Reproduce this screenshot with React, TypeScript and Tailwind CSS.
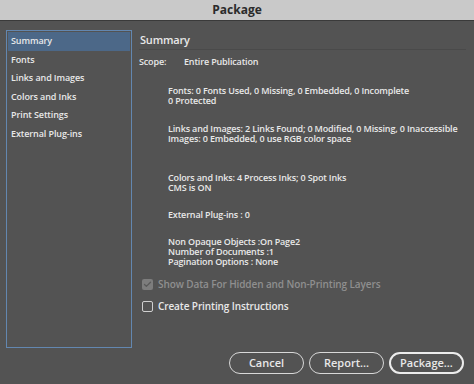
import { Check } from "lucide-react";

const sections = ["Summary", "Fonts", "Links and Images", "Colors and Inks", "Print Settings", "External Plug-ins"];

export default function App() {
  return (
    <div className="w-[474px] h-[384px] bg-[#535353] flex flex-col text-[#e8e8e8] overflow-hidden" style={{ fontFamily: '"Open Sans", "DejaVu Sans", sans-serif' }}>
      {/* Title bar */}
      <div className="h-[21px] bg-[#c9c9c9] border-b border-[#3a3a3a] flex items-center justify-center">
        <span className="text-[12px] font-bold text-[#2b2b2b]">Package</span>
      </div>

      <div className="flex flex-1 px-[6px] pt-[9px]">
        {/* Section list */}
        <div className="w-[126px] h-[318px] border border-[#6387b0] flex flex-col p-px">
          {sections.map((s, i) => (
            <div
              key={s}
              className={`h-[18.5px] flex items-center pl-[3px] pb-px text-[9px] font-semibold tracking-[-0.1px] ${i === 0 ? "bg-[#4c6888]" : ""}`}
            >
              {s}
            </div>
          ))}
        </div>

        {/* Summary panel */}
        <div className="flex-1 pl-[7px] pr-[2px]">
          <div className="h-[20px] flex items-center pl-px pt-px border-b border-[#4a4a4a] text-[11px] font-semibold tracking-[-0.2px]">
            Summary
          </div>
          <div className="flex items-center mt-[5px] h-[14px] text-[9px] font-semibold tracking-[-0.15px]">
            <span className="w-[45px]">Scope:</span>
            <span>Entire Publication</span>
          </div>

          <div className="pl-[29px] text-[9px] font-semibold leading-[10px] tracking-[-0.15px] whitespace-nowrap">
            <div className="mt-[17px]">
              <div>Fonts: 0 Fonts Used, 0 Missing, 0 Embedded, 0 Incomplete</div>
              <div>0 Protected</div>
            </div>
            <div className="mt-[18px]">
              <div>Links and Images: 2 Links Found; 0 Modified, 0 Missing, 0 Inaccessible</div>
              <div>Images: 0 Embedded, 0 use RGB color space</div>
            </div>
            <div className="mt-[29px]">
              <div>Colors and Inks: 4 Process Inks; 0 Spot Inks</div>
              <div>CMS is ON</div>
            </div>
            <div className="mt-[17px]">
              <div>External Plug-ins : 0</div>
            </div>
            <div className="mt-[17px]">
              <div>Non Opaque Objects :On Page2</div>
              <div>Number of Documents :1</div>
              <div>Pagination Options : None</div>
            </div>
          </div>

          <div className="mt-[10px] flex items-center h-[14px] pl-[3px] text-[10px] font-semibold tracking-[-0.1px] text-[#8f8f8f]">
            <span className="w-[11px] h-[11px] rounded-[2px] bg-[#7d7d7d] flex items-center justify-center mr-[5px]">
              <Check size={9} strokeWidth={3.5} className="text-[#5a5a5a]" />
            </span>
            Show Data For Hidden and Non-Printing Layers
          </div>
          <div className="mt-[8px] flex items-center h-[14px] pl-[3px] text-[10px] font-semibold tracking-[-0.1px]">
            <span className="w-[11px] h-[11px] rounded-[2px] border border-[#d0d0d0] mr-[5px]" />
            Create Printing Instructions
          </div>
        </div>
      </div>

      {/* Buttons */}
      <div className="flex justify-end gap-[5px] pr-[10px] pb-[10px] text-[11px] font-semibold">
        <button className="w-[75px] h-[22px] rounded-full border border-[#d8d8d8]">Cancel</button>
        <button className="w-[75px] h-[22px] rounded-full border border-[#d8d8d8]">Report...</button>
        <button className="w-[75px] h-[22px] rounded-full border-2 border-[#ececec]">Package...</button>
      </div>
    </div>
  );
}
